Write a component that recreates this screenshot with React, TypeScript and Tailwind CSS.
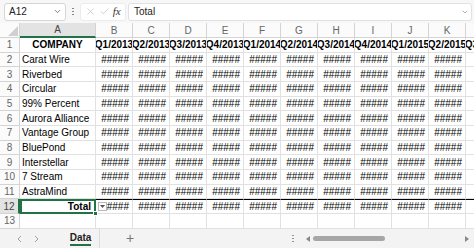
import { Check, ChevronDown, X } from "lucide-react";

const companies = [
  "Carat Wire",
  "Riverbed",
  "Circular",
  "99% Percent",
  "Aurora Alliance",
  "Vantage Group",
  "BluePond",
  "Interstellar",
  "7 Stream",
  "AstraMind",
];

const quarters = [
  "Q1/2013",
  "Q2/2013",
  "Q3/2013",
  "Q4/2013",
  "Q1/2014",
  "Q2/2014",
  "Q3/2014",
  "Q4/2014",
  "Q1/2015",
  "Q2/2015",
  "Q3/2015",
];

const letters = ["B", "C", "D", "E", "F", "G", "H", "I", "J", "K", "L"];

const gridCols = "grid grid-cols-[20px_76px_repeat(11,37px)] w-max";
const cell = "h-[14.67px] border-r border-b border-[#e1e1e1] overflow-hidden whitespace-nowrap";

function FormulaBar() {
  return (
    <div className="h-[23px] flex items-center bg-[#f7f7f7] pl-[4px] pr-[2px]">
      <div className="w-[62px] h-[18px] bg-white border border-[#d6d6d6] rounded-[3px] flex items-center justify-between pl-[4px] pr-[3px]">
        <span className="text-[10px] text-[#222]">A12</span>
        <ChevronDown className="w-[9px] h-[9px] text-[#555]" strokeWidth={2} />
      </div>
      <div className="w-[14px] flex flex-col items-center gap-[1.5px]">
        <span className="w-[1.5px] h-[1.5px] bg-[#777] rounded-full" />
        <span className="w-[1.5px] h-[1.5px] bg-[#777] rounded-full" />
        <span className="w-[1.5px] h-[1.5px] bg-[#777] rounded-full" />
      </div>
      <div className="w-[46px] h-[18px] bg-white rounded-[3px] flex items-center justify-around px-[3px] border border-[#ececec]">
        <X className="w-[11px] h-[11px] text-[#bdbdbd]" strokeWidth={1.5} />
        <Check className="w-[11px] h-[11px] text-[#bdbdbd]" strokeWidth={1.5} />
        <span className="text-[11px] italic text-[#333] font-['Liberation_Serif',serif]">fx</span>
      </div>
      <div className="flex-1 ml-[2px] h-[18px] bg-white border border-[#e2e2e2] rounded-[3px] flex items-center justify-between pl-[5px] pr-[2px]">
        <span className="text-[10px] text-[#222]">Total</span>
        <ChevronDown className="w-[8px] h-[8px] text-[#888]" strokeWidth={2} />
      </div>
    </div>
  );
}

function HeaderRow() {
  return (
    <div className={gridCols}>
      <div className="h-[15px] border-r border-b border-[#d4d4d4] bg-[#fbfbfb] relative">
        <svg className="absolute right-[1px] bottom-[1px]" width="10" height="10" viewBox="0 0 10 10">
          <polygon points="10,0 10,10 0,10" fill="#d0d0d0" />
        </svg>
      </div>
      <div className="h-[15px] bg-[#e3e3e3] border-r border-[#d4d4d4] border-b-2 border-b-[#217346] flex items-center justify-center text-[10px] text-[#444]">
        A
      </div>
      {letters.map((l) => (
        <div
          key={l}
          className="h-[15px] bg-[#fbfbfb] border-r border-b border-[#d4d4d4] flex items-center justify-center text-[10px] text-[#666]"
        >
          {l}
        </div>
      ))}
    </div>
  );
}

function RowNum({ n, active }: { n: number; active?: boolean }) {
  return (
    <div
      className={
        active
          ? "h-[14.67px] bg-[#e3e3e3] border-r-2 border-r-[#217346] border-b border-b-[#d4d4d4] flex items-center justify-center text-[10px] text-[#444]"
          : "h-[14.67px] bg-[#fbfbfb] border-r border-b border-[#d4d4d4] flex items-center justify-center text-[10px] text-[#666]"
      }
    >
      {n}
    </div>
  );
}

function Sheet() {
  return (
    <div className="flex-1 overflow-hidden">
      <HeaderRow />
      <div className={gridCols}>
        <RowNum n={1} />
        <div className={`${cell} flex items-center justify-center font-bold text-[10px]`}>COMPANY</div>
        {quarters.map((q) => (
          <div key={q} className={`${cell} flex items-center justify-center font-bold text-[10px]`}>
            {q}
          </div>
        ))}
      </div>
      {companies.map((c, i) => (
        <div key={c} className={gridCols}>
          <RowNum n={i + 2} />
          <div className={`${cell} flex items-center pl-[2px] text-[10px]`}>{c}</div>
          {quarters.map((q, j) => (
            <div
              key={q}
              className={`${cell} flex items-center ${j === 10 ? "justify-start" : "justify-end pr-[3px]"} text-[10px]`}
            >
              {j === 10 ? "" : "#####"}
            </div>
          ))}
        </div>
      ))}
      <div className={gridCols}>
        <RowNum n={12} active />
        <div className="h-[14.67px] relative border-2 border-[#217346] flex items-center justify-end pr-[3px] font-bold text-[10px]">
          Total
          <span className="absolute right-[-4px] bottom-[-4px] w-[5px] h-[5px] bg-[#217346] border border-white" />
          <span className="absolute right-[-13px] top-[1px] w-[9px] h-[9px] bg-white border border-[#b8b8b8] flex items-center justify-center z-10">
            <svg width="5" height="3" viewBox="0 0 5 3">
              <polygon points="0,0 5,0 2.5,3" fill="#555" />
            </svg>
          </span>
        </div>
        {quarters.map((q, j) => (
          <div
            key={q}
            className={`h-[14.67px] border-t-[1.5px] border-t-black border-r border-b border-[#e1e1e1] overflow-hidden flex items-center ${j === 10 ? "" : "justify-end pr-[3px]"} text-[10px]`}
          >
            {j === 10 ? "" : "#####"}
          </div>
        ))}
      </div>
      <div className={gridCols}>
        <RowNum n={13} />
        <div className={cell} />
        {quarters.map((q) => (
          <div key={q} className={cell} />
        ))}
      </div>
    </div>
  );
}

function TabBar() {
  return (
    <div className="h-[19px] bg-[#f3f3f3] flex items-center text-[10px]">
      <div className="w-[62px] flex items-center pl-[16px] gap-[12px] text-[#9a9a9a]">
        <svg width="6" height="8" viewBox="0 0 6 8">
          <polyline points="5,1 2,4 5,7" fill="none" stroke="#a0a0a0" strokeWidth="1" />
        </svg>
        <svg width="6" height="8" viewBox="0 0 6 8">
          <polyline points="1,1 4,4 1,7" fill="none" stroke="#a0a0a0" strokeWidth="1" />
        </svg>
      </div>
      <div className="w-[38px] h-full flex items-center justify-center border-r border-[#dcdcdc]">
        <span className="font-bold text-[#1f1f1f] border-b-2 border-[#217346] leading-[13px]">Data</span>
      </div>
      <div className="w-[60px] flex items-center justify-center text-[14px] text-[#777] font-light">+</div>
      <div className="flex-1" />
      <div className="w-[10px] flex flex-col items-center gap-[1.5px]">
        <span className="w-[1.5px] h-[1.5px] bg-[#888] rounded-full" />
        <span className="w-[1.5px] h-[1.5px] bg-[#888] rounded-full" />
        <span className="w-[1.5px] h-[1.5px] bg-[#888] rounded-full" />
      </div>
      <div className="w-[176px] flex items-center pl-[8px] pr-[5px]">
        <svg width="4" height="6" viewBox="0 0 4 6">
          <polygon points="4,0 4,6 0,3" fill="#888" />
        </svg>
        <div className="ml-[3px] w-[72px] h-[5px] rounded-full bg-[#a6a6a6]" />
        <div className="flex-1" />
        <svg width="4" height="6" viewBox="0 0 4 6">
          <polygon points="0,0 0,6 4,3" fill="#888" />
        </svg>
      </div>
    </div>
  );
}

export default function App() {
  return (
    <div className="w-[474px] h-[248px] flex flex-col bg-white overflow-hidden font-['Liberation_Sans',Arial,sans-serif] text-black">
      <FormulaBar />
      <Sheet />
      <TabBar />
    </div>
  );
}
